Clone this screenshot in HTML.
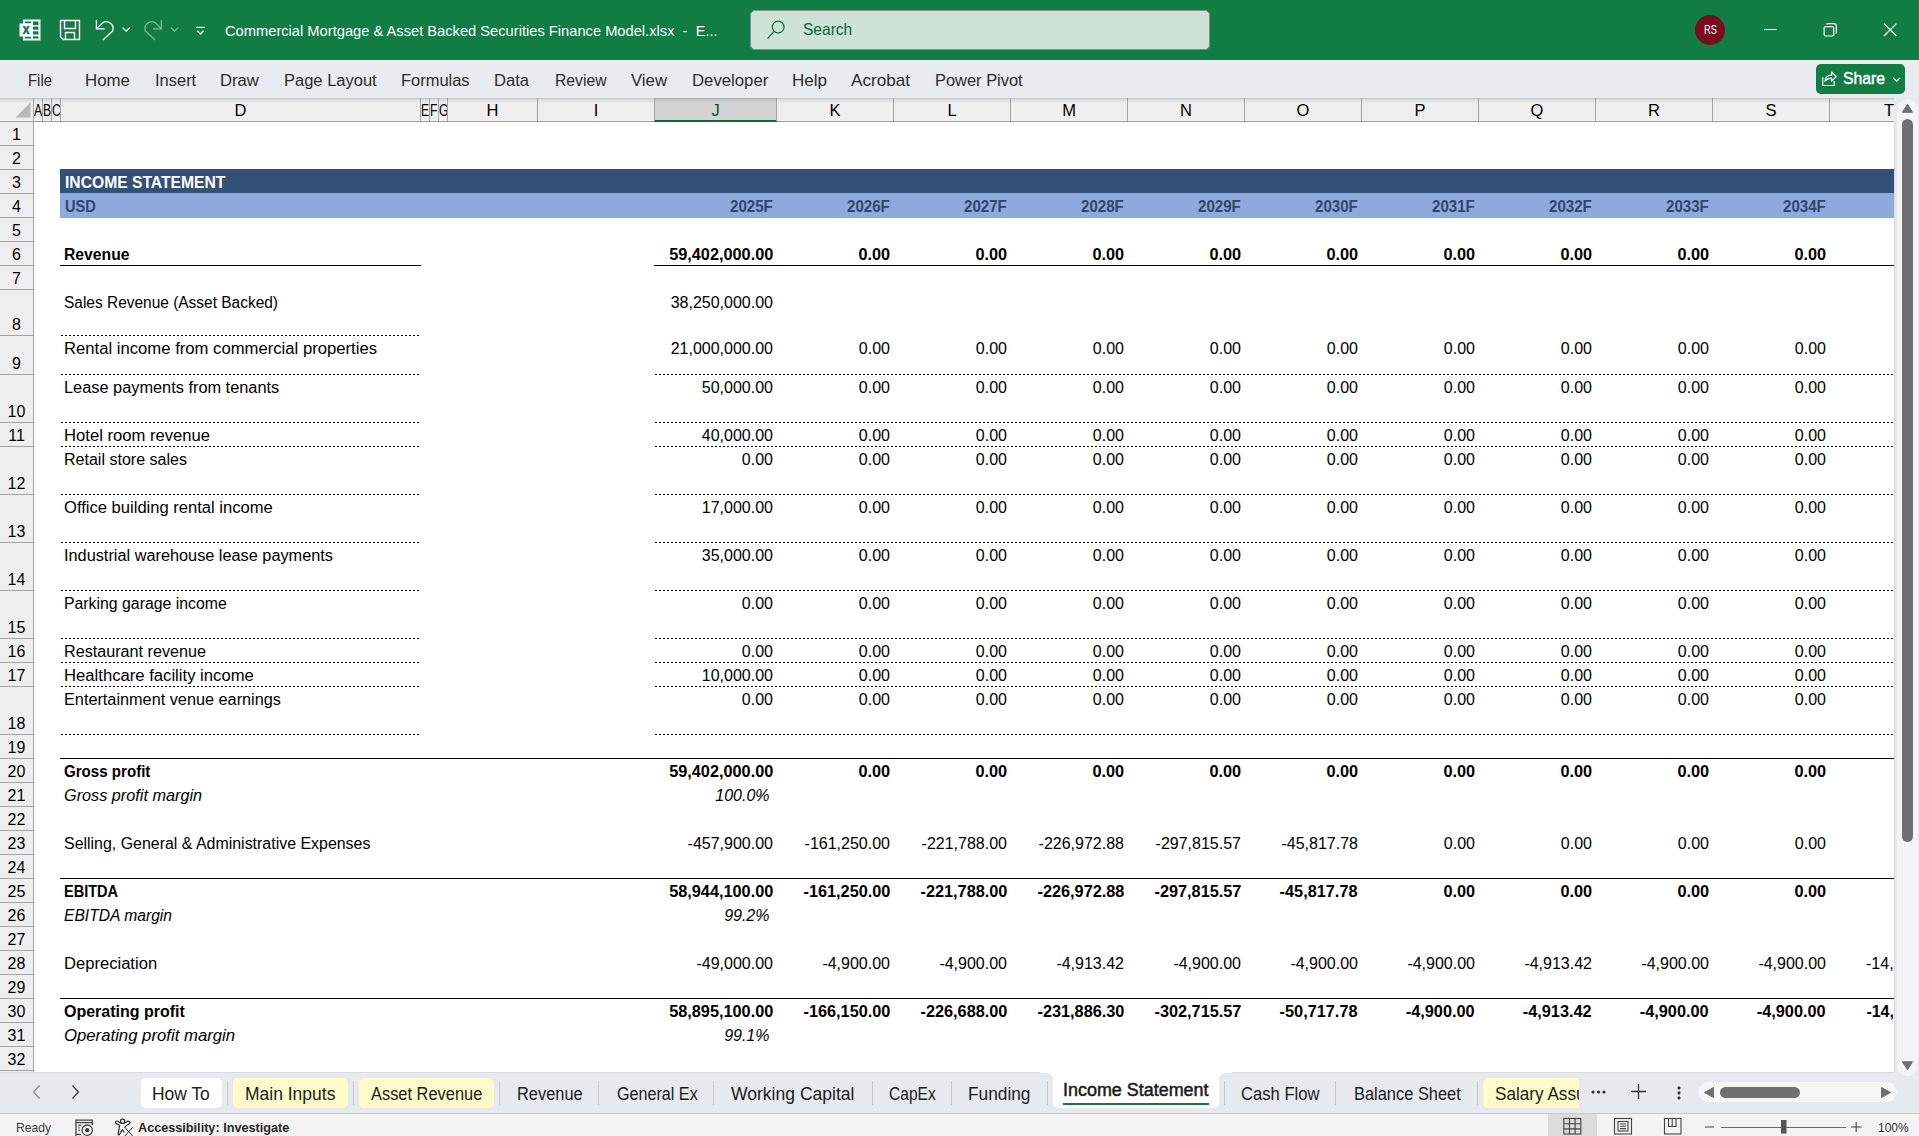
<!DOCTYPE html><html><head><meta charset="utf-8"><style>
html,body{margin:0;padding:0;width:1919px;height:1136px;overflow:hidden;background:#fff;font-family:"Liberation Sans", sans-serif;}
.t{position:absolute;white-space:pre;}
.r{position:absolute;}
svg{position:absolute;overflow:visible;}
</style></head><body>
<div class="r" style="left:0px;top:0px;width:1919px;height:60px;background:#117c43;"></div>
<svg style="left:0;top:0" width="1919" height="60" viewBox="0 0 1919 60">
<rect x="23" y="19.5" width="17.5" height="21" fill="#fff"/>
<rect x="25" y="21.5" width="6" height="2" fill="#117c43"/>
<rect x="33" y="21.5" width="5.5" height="3.5" fill="#117c43"/>
<rect x="33" y="26.5" width="5.5" height="3.2" fill="#117c43"/>
<rect x="33" y="31.3" width="5.5" height="3.2" fill="#117c43"/>
<rect x="33" y="36.3" width="5.5" height="2.2" fill="#117c43"/>
<rect x="25" y="36.5" width="6" height="2" fill="#117c43"/>
<rect x="19.5" y="23.5" width="13" height="13" fill="#fff"/>
<path d="M22.6 26 H25.1 L26.2 28.3 L27.3 26 H29.8 L27.5 30 L29.9 34 H27.4 L26.2 31.6 L25 34 H22.5 L24.9 30 Z" fill="#117c43"/>
<path d="M60.5 20.5 H79.5 V39.5 H63.3 L60.5 36.7 Z" stroke="#fff" stroke-width="1.4" fill="none"/>
<path d="M64.5 20.5 V28.5 H75.5 V20.5" stroke="#fff" stroke-width="1.4" fill="none"/>
<path d="M65.5 39.5 V32.5 H74.5 V39.5" stroke="#fff" stroke-width="1.4" fill="none"/>
<g stroke="#fff" stroke-width="1.3" fill="none">
<path d="M96.4 20 V28.8 H104.8"/>
<path d="M96.9 28.3 L102.6 22.9 A6.7 6.7 0 0 1 112.5 31 L102.9 39.9"/>
<path d="M122.6 27.6 L126.2 31.2 L129.8 27.6"/>
</g>
<g stroke="#fff" stroke-opacity="0.45" stroke-width="1.3" fill="none">
<path d="M161.4 20 V28.8 H153"/>
<path d="M161.1 28.3 L155.4 22.9 A6.7 6.7 0 0 0 145.5 31 L155.1 39.9"/>
<path d="M171 27.6 L174.6 31.2 L178.2 27.6"/>
</g>
<g stroke="#fff" stroke-width="1.3" fill="none">
<path d="M196 27.4 H204.8"/>
<path d="M197.2 30.8 L200.4 34 L203.6 30.8"/>
</g>
<path d="M1764 29.5 H1776.5" stroke="#fff" stroke-width="1.1"/>
<rect x="1824.1" y="26.6" width="9.6" height="9.4" rx="1.5" stroke="#fff" stroke-width="1.2" fill="none"/>
<path d="M1826.4 24.4 Q1826.9 23.6 1828.2 23.6 H1834 Q1836.3 23.6 1836.3 25.9 V31.8 Q1836.3 33.1 1835.7 33.6" stroke="#fff" stroke-width="1.2" fill="none"/>
<path d="M1884 23.6 L1896.4 36 M1896.4 23.6 L1884 36" stroke="#fff" stroke-width="1.2"/>
<circle cx="1710" cy="30" r="15" fill="#7a0c1f"/>
</svg>
<div class="t sc" style="transform:scaleX(0.9664);transform-origin:0 0;left:225.3px;top:23.13px;font-size:15.2px;line-height:15.2px;color:#fff;">Commercial Mortgage &amp; Asset Backed Securities Finance Model.xlsx  -  E...</div>
<div class="t sc" style="transform:scaleX(0.7424);transform-origin:0 0;left:1703.5px;top:24.42px;font-size:12.5px;line-height:12.5px;color:#fff;">RS</div>
<div class="r" style="left:750px;top:10px;width:460px;height:40px;background:#cfe2d6;border:1px solid #7f9487;box-sizing:border-box;border-radius:5px;"></div>
<svg style="left:0;top:0" width="1919" height="60"><g stroke="#0f6b39" stroke-width="1.2" fill="none">
<circle cx="778.2" cy="27" r="5.9"/><path d="M774 31.4 L767.6 38.6"/></g></svg>
<div class="t sc" style="transform:scaleX(0.9411);transform-origin:0 0;left:802.8px;top:21.03px;font-size:16.5px;line-height:16.5px;color:#0e6236;">Search</div>
<div class="r" style="left:0px;top:60px;width:1919px;height:38px;background:#e8ebf0;"></div>
<div class="t tab" style="transform:scaleX(0.9309);transform-origin:0 0;left:27.5px;top:73.46px;font-size:16px;line-height:16px;color:#2b2b2b;">File</div>
<div class="t tab" style="transform:scaleX(1.0542);transform-origin:0 0;left:84.5px;top:73.46px;font-size:16px;line-height:16px;color:#2b2b2b;">Home</div>
<div class="t tab" style="transform:scaleX(1.0296);transform-origin:0 0;left:154.5px;top:73.46px;font-size:16px;line-height:16px;color:#2b2b2b;">Insert</div>
<div class="t tab" style="transform:scaleX(1.0390);transform-origin:0 0;left:220px;top:73.46px;font-size:16px;line-height:16px;color:#2b2b2b;">Draw</div>
<div class="t tab" style="transform:scaleX(1.0316);transform-origin:0 0;left:284px;top:73.46px;font-size:16px;line-height:16px;color:#2b2b2b;">Page Layout</div>
<div class="t tab" style="transform:scaleX(1.0287);transform-origin:0 0;left:401px;top:73.46px;font-size:16px;line-height:16px;color:#2b2b2b;">Formulas</div>
<div class="t tab" style="transform:scaleX(1.0356);transform-origin:0 0;left:494.3px;top:73.46px;font-size:16px;line-height:16px;color:#2b2b2b;">Data</div>
<div class="t tab" style="transform:scaleX(0.9815);transform-origin:0 0;left:554.5px;top:73.46px;font-size:16px;line-height:16px;color:#2b2b2b;">Review</div>
<div class="t tab" style="transform:scaleX(1.0468);transform-origin:0 0;left:631px;top:73.46px;font-size:16px;line-height:16px;color:#2b2b2b;">View</div>
<div class="t tab" style="transform:scaleX(1.0461);transform-origin:0 0;left:691.5px;top:73.46px;font-size:16px;line-height:16px;color:#2b2b2b;">Developer</div>
<div class="t tab" style="transform:scaleX(1.0636);transform-origin:0 0;left:792px;top:73.46px;font-size:16px;line-height:16px;color:#2b2b2b;">Help</div>
<div class="t tab" style="transform:scaleX(1.0700);transform-origin:0 0;left:851.3px;top:73.46px;font-size:16px;line-height:16px;color:#2b2b2b;">Acrobat</div>
<div class="t tab" style="transform:scaleX(1.0272);transform-origin:0 0;left:935.3px;top:73.46px;font-size:16px;line-height:16px;color:#2b2b2b;">Power Pivot</div>
<div class="r" style="left:1816px;top:64px;width:89px;height:30px;background:#117c43;border-radius:5px;"></div>
<svg style="left:0;top:0" width="1919" height="100"><g stroke="#fff" stroke-width="1.2" fill="none">
<path d="M1822.7 77.3 V85.5 H1834.2 V81"/>
<path d="M1824.9 81.2 C1825.4 77.2 1828 75.2 1831.6 75.2 V72 L1836.2 76.6 L1831.6 81.1 V78.1 C1829 78.1 1826.6 79.2 1824.9 81.2 Z" stroke-linejoin="round"/>
<path d="M1893.2 77.8 L1896.6 81.2 L1900 77.8"/>
</g></svg>
<div class="t sc" style="transform:scaleX(0.9134);transform-origin:0 0;left:1842.9px;top:70.44px;font-size:17.2px;line-height:17.2px;color:#fff;-webkit-text-stroke:0.45px #fff;">Share</div>
<div class="r" style="left:0px;top:98px;width:1894px;height:24px;background:linear-gradient(#c9c9c9 0px,#e6e6e6 3px,#efefef 6px,#efefef 22px,#fafafa 23px);"></div>
<div class="r" style="left:655px;top:98px;width:121px;height:22px;background:linear-gradient(#b3b3b3 0px,#cccccc 3px,#d3d3d3 6px);"></div>
<div class="r" style="left:654px;top:120px;width:123px;height:2px;background:#0b6b36;"></div>
<div class="r" style="left:0px;top:121px;width:654px;height:1px;background:#9e9e9e;"></div>
<div class="r" style="left:777px;top:121px;width:1117px;height:1px;background:#9e9e9e;"></div>
<div class="r" style="left:42px;top:98px;width:1px;height:23px;background:#a3a3a3;"></div>
<div class="r" style="left:51px;top:98px;width:1px;height:23px;background:#a3a3a3;"></div>
<div class="r" style="left:60px;top:98px;width:1px;height:23px;background:#a3a3a3;"></div>
<div class="r" style="left:420px;top:98px;width:1px;height:23px;background:#a3a3a3;"></div>
<div class="r" style="left:429px;top:98px;width:1px;height:23px;background:#a3a3a3;"></div>
<div class="r" style="left:438px;top:98px;width:1px;height:23px;background:#a3a3a3;"></div>
<div class="r" style="left:447px;top:98px;width:1px;height:23px;background:#a3a3a3;"></div>
<div class="r" style="left:537px;top:98px;width:1px;height:23px;background:#a3a3a3;"></div>
<div class="r" style="left:654px;top:98px;width:1px;height:23px;background:#a3a3a3;"></div>
<div class="r" style="left:776px;top:98px;width:1px;height:23px;background:#a3a3a3;"></div>
<div class="r" style="left:893px;top:98px;width:1px;height:23px;background:#a3a3a3;"></div>
<div class="r" style="left:1010px;top:98px;width:1px;height:23px;background:#a3a3a3;"></div>
<div class="r" style="left:1127px;top:98px;width:1px;height:23px;background:#a3a3a3;"></div>
<div class="r" style="left:1244px;top:98px;width:1px;height:23px;background:#a3a3a3;"></div>
<div class="r" style="left:1361px;top:98px;width:1px;height:23px;background:#a3a3a3;"></div>
<div class="r" style="left:1478px;top:98px;width:1px;height:23px;background:#a3a3a3;"></div>
<div class="r" style="left:1595px;top:98px;width:1px;height:23px;background:#a3a3a3;"></div>
<div class="r" style="left:1712px;top:98px;width:1px;height:23px;background:#a3a3a3;"></div>
<div class="r" style="left:1829px;top:98px;width:1px;height:23px;background:#a3a3a3;"></div>
<div class="r" style="left:33px;top:98px;width:1px;height:24px;background:#a3a3a3;"></div>
<svg style="left:0;top:98" width="33" height="24"><path d="M30.5 4.5 V19.5 H15.5 Z" fill="#b8b8b8"/></svg>
<div class="r" style="left:34px;top:98px;width:8px;height:23px;overflow:hidden;"><div class="t" style="left:0px;top:4.03px;font-size:16.5px;line-height:16.5px;color:#000;transform:scaleX(0.74);transform-origin:0 0;">A</div></div>
<div class="r" style="left:43px;top:98px;width:8px;height:23px;overflow:hidden;"><div class="t" style="left:0px;top:4.03px;font-size:16.5px;line-height:16.5px;color:#000;transform:scaleX(0.74);transform-origin:0 0;">B</div></div>
<div class="r" style="left:52px;top:98px;width:8px;height:23px;overflow:hidden;"><div class="t" style="left:0px;top:4.03px;font-size:16.5px;line-height:16.5px;color:#000;transform:scaleX(0.74);transform-origin:0 0;">C</div></div>
<div class="t" style="left:-59.5px;width:600px;text-align:center;top:102.03px;font-size:16.5px;line-height:16.5px;color:#000;">D</div>
<div class="r" style="left:421px;top:98px;width:8px;height:23px;overflow:hidden;"><div class="t" style="left:0px;top:4.03px;font-size:16.5px;line-height:16.5px;color:#000;transform:scaleX(0.74);transform-origin:0 0;">E</div></div>
<div class="r" style="left:430px;top:98px;width:8px;height:23px;overflow:hidden;"><div class="t" style="left:0px;top:4.03px;font-size:16.5px;line-height:16.5px;color:#000;transform:scaleX(0.74);transform-origin:0 0;">F</div></div>
<div class="r" style="left:439px;top:98px;width:8px;height:23px;overflow:hidden;"><div class="t" style="left:0px;top:4.03px;font-size:16.5px;line-height:16.5px;color:#000;transform:scaleX(0.74);transform-origin:0 0;">G</div></div>
<div class="t" style="left:192.5px;width:600px;text-align:center;top:102.03px;font-size:16.5px;line-height:16.5px;color:#000;">H</div>
<div class="t" style="left:296.0px;width:600px;text-align:center;top:102.03px;font-size:16.5px;line-height:16.5px;color:#000;">I</div>
<div class="t" style="left:415.5px;width:600px;text-align:center;top:102.03px;font-size:16.5px;line-height:16.5px;color:#0b4f2a;">J</div>
<div class="t" style="left:535.0px;width:600px;text-align:center;top:102.03px;font-size:16.5px;line-height:16.5px;color:#000;">K</div>
<div class="t" style="left:652.0px;width:600px;text-align:center;top:102.03px;font-size:16.5px;line-height:16.5px;color:#000;">L</div>
<div class="t" style="left:769.0px;width:600px;text-align:center;top:102.03px;font-size:16.5px;line-height:16.5px;color:#000;">M</div>
<div class="t" style="left:886.0px;width:600px;text-align:center;top:102.03px;font-size:16.5px;line-height:16.5px;color:#000;">N</div>
<div class="t" style="left:1003.0px;width:600px;text-align:center;top:102.03px;font-size:16.5px;line-height:16.5px;color:#000;">O</div>
<div class="t" style="left:1120.0px;width:600px;text-align:center;top:102.03px;font-size:16.5px;line-height:16.5px;color:#000;">P</div>
<div class="t" style="left:1237.0px;width:600px;text-align:center;top:102.03px;font-size:16.5px;line-height:16.5px;color:#000;">Q</div>
<div class="t" style="left:1354.0px;width:600px;text-align:center;top:102.03px;font-size:16.5px;line-height:16.5px;color:#000;">R</div>
<div class="t" style="left:1471.0px;width:600px;text-align:center;top:102.03px;font-size:16.5px;line-height:16.5px;color:#000;">S</div>
<div class="t" style="right:25px;top:102.03px;font-size:16.5px;line-height:16.5px;color:#000;">T</div>
<div class="r" style="left:0px;top:122px;width:33px;height:950px;background:#efefef;"></div>
<div class="r" style="left:33px;top:122px;width:1px;height:950px;background:#a3a3a3;"></div>
<div class="r" style="left:0px;top:145px;width:33px;height:1px;background:#a3a3a3;"></div>
<div class="t" style="left:-283.5px;width:600px;text-align:center;top:127.46px;font-size:16px;line-height:16px;color:#000;">1</div>
<div class="r" style="left:0px;top:169px;width:33px;height:1px;background:#a3a3a3;"></div>
<div class="t" style="left:-283.5px;width:600px;text-align:center;top:151.46px;font-size:16px;line-height:16px;color:#000;">2</div>
<div class="r" style="left:0px;top:193px;width:33px;height:1px;background:#a3a3a3;"></div>
<div class="t" style="left:-283.5px;width:600px;text-align:center;top:175.46px;font-size:16px;line-height:16px;color:#000;">3</div>
<div class="r" style="left:0px;top:217px;width:33px;height:1px;background:#a3a3a3;"></div>
<div class="t" style="left:-283.5px;width:600px;text-align:center;top:199.46px;font-size:16px;line-height:16px;color:#000;">4</div>
<div class="r" style="left:0px;top:241px;width:33px;height:1px;background:#a3a3a3;"></div>
<div class="t" style="left:-283.5px;width:600px;text-align:center;top:223.46px;font-size:16px;line-height:16px;color:#000;">5</div>
<div class="r" style="left:0px;top:265px;width:33px;height:1px;background:#a3a3a3;"></div>
<div class="t" style="left:-283.5px;width:600px;text-align:center;top:247.46px;font-size:16px;line-height:16px;color:#000;">6</div>
<div class="r" style="left:0px;top:289px;width:33px;height:1px;background:#a3a3a3;"></div>
<div class="t" style="left:-283.5px;width:600px;text-align:center;top:271.46px;font-size:16px;line-height:16px;color:#000;">7</div>
<div class="r" style="left:0px;top:335px;width:33px;height:1px;background:#a3a3a3;"></div>
<div class="t" style="left:-283.5px;width:600px;text-align:center;top:317.46px;font-size:16px;line-height:16px;color:#000;">8</div>
<div class="r" style="left:0px;top:374px;width:33px;height:1px;background:#a3a3a3;"></div>
<div class="t" style="left:-283.5px;width:600px;text-align:center;top:356.46px;font-size:16px;line-height:16px;color:#000;">9</div>
<div class="r" style="left:0px;top:422px;width:33px;height:1px;background:#a3a3a3;"></div>
<div class="t" style="left:-283.5px;width:600px;text-align:center;top:404.46px;font-size:16px;line-height:16px;color:#000;">10</div>
<div class="r" style="left:0px;top:446px;width:33px;height:1px;background:#a3a3a3;"></div>
<div class="t" style="left:-283.5px;width:600px;text-align:center;top:428.46px;font-size:16px;line-height:16px;color:#000;">11</div>
<div class="r" style="left:0px;top:494px;width:33px;height:1px;background:#a3a3a3;"></div>
<div class="t" style="left:-283.5px;width:600px;text-align:center;top:476.46px;font-size:16px;line-height:16px;color:#000;">12</div>
<div class="r" style="left:0px;top:542px;width:33px;height:1px;background:#a3a3a3;"></div>
<div class="t" style="left:-283.5px;width:600px;text-align:center;top:524.46px;font-size:16px;line-height:16px;color:#000;">13</div>
<div class="r" style="left:0px;top:590px;width:33px;height:1px;background:#a3a3a3;"></div>
<div class="t" style="left:-283.5px;width:600px;text-align:center;top:572.46px;font-size:16px;line-height:16px;color:#000;">14</div>
<div class="r" style="left:0px;top:638px;width:33px;height:1px;background:#a3a3a3;"></div>
<div class="t" style="left:-283.5px;width:600px;text-align:center;top:620.46px;font-size:16px;line-height:16px;color:#000;">15</div>
<div class="r" style="left:0px;top:662px;width:33px;height:1px;background:#a3a3a3;"></div>
<div class="t" style="left:-283.5px;width:600px;text-align:center;top:644.46px;font-size:16px;line-height:16px;color:#000;">16</div>
<div class="r" style="left:0px;top:686px;width:33px;height:1px;background:#a3a3a3;"></div>
<div class="t" style="left:-283.5px;width:600px;text-align:center;top:668.46px;font-size:16px;line-height:16px;color:#000;">17</div>
<div class="r" style="left:0px;top:734px;width:33px;height:1px;background:#a3a3a3;"></div>
<div class="t" style="left:-283.5px;width:600px;text-align:center;top:716.46px;font-size:16px;line-height:16px;color:#000;">18</div>
<div class="r" style="left:0px;top:758px;width:33px;height:1px;background:#a3a3a3;"></div>
<div class="t" style="left:-283.5px;width:600px;text-align:center;top:740.46px;font-size:16px;line-height:16px;color:#000;">19</div>
<div class="r" style="left:0px;top:782px;width:33px;height:1px;background:#a3a3a3;"></div>
<div class="t" style="left:-283.5px;width:600px;text-align:center;top:764.46px;font-size:16px;line-height:16px;color:#000;">20</div>
<div class="r" style="left:0px;top:806px;width:33px;height:1px;background:#a3a3a3;"></div>
<div class="t" style="left:-283.5px;width:600px;text-align:center;top:788.46px;font-size:16px;line-height:16px;color:#000;">21</div>
<div class="r" style="left:0px;top:830px;width:33px;height:1px;background:#a3a3a3;"></div>
<div class="t" style="left:-283.5px;width:600px;text-align:center;top:812.46px;font-size:16px;line-height:16px;color:#000;">22</div>
<div class="r" style="left:0px;top:854px;width:33px;height:1px;background:#a3a3a3;"></div>
<div class="t" style="left:-283.5px;width:600px;text-align:center;top:836.46px;font-size:16px;line-height:16px;color:#000;">23</div>
<div class="r" style="left:0px;top:878px;width:33px;height:1px;background:#a3a3a3;"></div>
<div class="t" style="left:-283.5px;width:600px;text-align:center;top:860.46px;font-size:16px;line-height:16px;color:#000;">24</div>
<div class="r" style="left:0px;top:902px;width:33px;height:1px;background:#a3a3a3;"></div>
<div class="t" style="left:-283.5px;width:600px;text-align:center;top:884.46px;font-size:16px;line-height:16px;color:#000;">25</div>
<div class="r" style="left:0px;top:926px;width:33px;height:1px;background:#a3a3a3;"></div>
<div class="t" style="left:-283.5px;width:600px;text-align:center;top:908.46px;font-size:16px;line-height:16px;color:#000;">26</div>
<div class="r" style="left:0px;top:950px;width:33px;height:1px;background:#a3a3a3;"></div>
<div class="t" style="left:-283.5px;width:600px;text-align:center;top:932.46px;font-size:16px;line-height:16px;color:#000;">27</div>
<div class="r" style="left:0px;top:974px;width:33px;height:1px;background:#a3a3a3;"></div>
<div class="t" style="left:-283.5px;width:600px;text-align:center;top:956.46px;font-size:16px;line-height:16px;color:#000;">28</div>
<div class="r" style="left:0px;top:998px;width:33px;height:1px;background:#a3a3a3;"></div>
<div class="t" style="left:-283.5px;width:600px;text-align:center;top:980.46px;font-size:16px;line-height:16px;color:#000;">29</div>
<div class="r" style="left:0px;top:1022px;width:33px;height:1px;background:#a3a3a3;"></div>
<div class="t" style="left:-283.5px;width:600px;text-align:center;top:1004.46px;font-size:16px;line-height:16px;color:#000;">30</div>
<div class="r" style="left:0px;top:1046px;width:33px;height:1px;background:#a3a3a3;"></div>
<div class="t" style="left:-283.5px;width:600px;text-align:center;top:1028.46px;font-size:16px;line-height:16px;color:#000;">31</div>
<div class="r" style="left:0px;top:1070px;width:33px;height:1px;background:#a3a3a3;"></div>
<div class="t" style="left:-283.5px;width:600px;text-align:center;top:1052.46px;font-size:16px;line-height:16px;color:#000;">32</div>
<div class="r" style="left:34px;top:122px;width:1860px;height:950px;background:#fff;"></div>
<div class="r" style="left:60px;top:169px;width:1834px;height:24px;background:#335076;"></div>
<div class="r" style="left:60px;top:193px;width:1834px;height:25px;background:#8ea9db;"></div>
<div class="t sc" style="transform:scaleX(0.9784);transform-origin:0 0;left:64.6px;top:175.46px;font-size:16px;line-height:16px;font-weight:bold;color:#fff;">INCOME STATEMENT</div>
<div class="t sc" style="transform:scaleX(0.9117);transform-origin:0 0;left:64.8px;top:199.46px;font-size:16px;line-height:16px;font-weight:bold;color:#30466b;">USD</div>
<div class="t sc" style="transform:scaleX(0.9433);transform-origin:0 0;left:729.6px;top:199.46px;font-size:16px;line-height:16px;font-weight:bold;color:#30466b;">2025F</div>
<div class="t sc" style="transform:scaleX(0.9433);transform-origin:0 0;left:846.6px;top:199.46px;font-size:16px;line-height:16px;font-weight:bold;color:#30466b;">2026F</div>
<div class="t sc" style="transform:scaleX(0.9433);transform-origin:0 0;left:963.6px;top:199.46px;font-size:16px;line-height:16px;font-weight:bold;color:#30466b;">2027F</div>
<div class="t sc" style="transform:scaleX(0.9433);transform-origin:0 0;left:1080.6000000000001px;top:199.46px;font-size:16px;line-height:16px;font-weight:bold;color:#30466b;">2028F</div>
<div class="t sc" style="transform:scaleX(0.9433);transform-origin:0 0;left:1197.6000000000001px;top:199.46px;font-size:16px;line-height:16px;font-weight:bold;color:#30466b;">2029F</div>
<div class="t sc" style="transform:scaleX(0.9433);transform-origin:0 0;left:1314.6000000000001px;top:199.46px;font-size:16px;line-height:16px;font-weight:bold;color:#30466b;">2030F</div>
<div class="t sc" style="transform:scaleX(0.9433);transform-origin:0 0;left:1431.6000000000001px;top:199.46px;font-size:16px;line-height:16px;font-weight:bold;color:#30466b;">2031F</div>
<div class="t sc" style="transform:scaleX(0.9433);transform-origin:0 0;left:1548.6000000000001px;top:199.46px;font-size:16px;line-height:16px;font-weight:bold;color:#30466b;">2032F</div>
<div class="t sc" style="transform:scaleX(0.9433);transform-origin:0 0;left:1665.6000000000001px;top:199.46px;font-size:16px;line-height:16px;font-weight:bold;color:#30466b;">2033F</div>
<div class="t sc" style="transform:scaleX(0.9433);transform-origin:0 0;left:1782.6000000000001px;top:199.46px;font-size:16px;line-height:16px;font-weight:bold;color:#30466b;">2034F</div>
<div class="t sc" style="transform:scaleX(0.9820);transform-origin:0 0;left:64.3px;top:247.46px;font-size:16px;line-height:16px;font-weight:bold;color:#000;">Revenue</div>
<div class="t" style="right:1146px;top:247.46px;font-size:16px;line-height:16px;font-weight:bold;color:#000;transform:scaleX(1.018);transform-origin:100% 0;">59,402,000.00</div>
<div class="t" style="right:1029px;top:247.46px;font-size:16px;line-height:16px;font-weight:bold;color:#000;transform:scaleX(1.018);transform-origin:100% 0;">0.00</div>
<div class="t" style="right:912px;top:247.46px;font-size:16px;line-height:16px;font-weight:bold;color:#000;transform:scaleX(1.018);transform-origin:100% 0;">0.00</div>
<div class="t" style="right:795px;top:247.46px;font-size:16px;line-height:16px;font-weight:bold;color:#000;transform:scaleX(1.018);transform-origin:100% 0;">0.00</div>
<div class="t" style="right:678px;top:247.46px;font-size:16px;line-height:16px;font-weight:bold;color:#000;transform:scaleX(1.018);transform-origin:100% 0;">0.00</div>
<div class="t" style="right:561px;top:247.46px;font-size:16px;line-height:16px;font-weight:bold;color:#000;transform:scaleX(1.018);transform-origin:100% 0;">0.00</div>
<div class="t" style="right:444px;top:247.46px;font-size:16px;line-height:16px;font-weight:bold;color:#000;transform:scaleX(1.018);transform-origin:100% 0;">0.00</div>
<div class="t" style="right:327px;top:247.46px;font-size:16px;line-height:16px;font-weight:bold;color:#000;transform:scaleX(1.018);transform-origin:100% 0;">0.00</div>
<div class="t" style="right:210px;top:247.46px;font-size:16px;line-height:16px;font-weight:bold;color:#000;transform:scaleX(1.018);transform-origin:100% 0;">0.00</div>
<div class="t" style="right:93px;top:247.46px;font-size:16px;line-height:16px;font-weight:bold;color:#000;transform:scaleX(1.018);transform-origin:100% 0;">0.00</div>
<div class="r" style="left:60px;top:265px;width:361px;height:1px;background:#000;"></div>
<div class="r" style="left:654px;top:265px;width:1240px;height:1px;background:#000;"></div>
<div class="t sc" style="transform:scaleX(0.9663);transform-origin:0 0;left:64px;top:295.46px;font-size:16px;line-height:16px;color:#000;">Sales Revenue (Asset Backed)</div>
<div class="t" style="right:1146px;top:295.46px;font-size:16px;line-height:16px;color:#000;">38,250,000.00</div>
<div class="r" style="left:61px;top:335px;width:360px;height:1px;background:repeating-linear-gradient(90deg,#000 0px,#000 2px,transparent 2px,transparent 4px);"></div>
<div class="t sc" style="transform:scaleX(1.0414);transform-origin:0 0;left:64.3px;top:341.46px;font-size:16px;line-height:16px;color:#000;">Rental income from commercial properties</div>
<div class="t" style="right:1146px;top:341.46px;font-size:16px;line-height:16px;color:#000;">21,000,000.00</div>
<div class="t" style="right:1029px;top:341.46px;font-size:16px;line-height:16px;color:#000;">0.00</div>
<div class="t" style="right:912px;top:341.46px;font-size:16px;line-height:16px;color:#000;">0.00</div>
<div class="t" style="right:795px;top:341.46px;font-size:16px;line-height:16px;color:#000;">0.00</div>
<div class="t" style="right:678px;top:341.46px;font-size:16px;line-height:16px;color:#000;">0.00</div>
<div class="t" style="right:561px;top:341.46px;font-size:16px;line-height:16px;color:#000;">0.00</div>
<div class="t" style="right:444px;top:341.46px;font-size:16px;line-height:16px;color:#000;">0.00</div>
<div class="t" style="right:327px;top:341.46px;font-size:16px;line-height:16px;color:#000;">0.00</div>
<div class="t" style="right:210px;top:341.46px;font-size:16px;line-height:16px;color:#000;">0.00</div>
<div class="t" style="right:93px;top:341.46px;font-size:16px;line-height:16px;color:#000;">0.00</div>
<div class="r" style="left:61px;top:374px;width:360px;height:1px;background:repeating-linear-gradient(90deg,#000 0px,#000 2px,transparent 2px,transparent 4px);"></div>
<div class="r" style="left:655px;top:374px;width:1239px;height:1px;background:repeating-linear-gradient(90deg,#000 0px,#000 2px,transparent 2px,transparent 4px);"></div>
<div class="t sc" style="transform:scaleX(1.0210);transform-origin:0 0;left:64.3px;top:380.46px;font-size:16px;line-height:16px;color:#000;">Lease payments from tenants</div>
<div class="t" style="right:1146px;top:380.46px;font-size:16px;line-height:16px;color:#000;">50,000.00</div>
<div class="t" style="right:1029px;top:380.46px;font-size:16px;line-height:16px;color:#000;">0.00</div>
<div class="t" style="right:912px;top:380.46px;font-size:16px;line-height:16px;color:#000;">0.00</div>
<div class="t" style="right:795px;top:380.46px;font-size:16px;line-height:16px;color:#000;">0.00</div>
<div class="t" style="right:678px;top:380.46px;font-size:16px;line-height:16px;color:#000;">0.00</div>
<div class="t" style="right:561px;top:380.46px;font-size:16px;line-height:16px;color:#000;">0.00</div>
<div class="t" style="right:444px;top:380.46px;font-size:16px;line-height:16px;color:#000;">0.00</div>
<div class="t" style="right:327px;top:380.46px;font-size:16px;line-height:16px;color:#000;">0.00</div>
<div class="t" style="right:210px;top:380.46px;font-size:16px;line-height:16px;color:#000;">0.00</div>
<div class="t" style="right:93px;top:380.46px;font-size:16px;line-height:16px;color:#000;">0.00</div>
<div class="r" style="left:61px;top:422px;width:360px;height:1px;background:repeating-linear-gradient(90deg,#000 0px,#000 2px,transparent 2px,transparent 4px);"></div>
<div class="r" style="left:655px;top:422px;width:1239px;height:1px;background:repeating-linear-gradient(90deg,#000 0px,#000 2px,transparent 2px,transparent 4px);"></div>
<div class="t sc" style="transform:scaleX(1.0397);transform-origin:0 0;left:64.3px;top:428.46px;font-size:16px;line-height:16px;color:#000;">Hotel room revenue</div>
<div class="t" style="right:1146px;top:428.46px;font-size:16px;line-height:16px;color:#000;">40,000.00</div>
<div class="t" style="right:1029px;top:428.46px;font-size:16px;line-height:16px;color:#000;">0.00</div>
<div class="t" style="right:912px;top:428.46px;font-size:16px;line-height:16px;color:#000;">0.00</div>
<div class="t" style="right:795px;top:428.46px;font-size:16px;line-height:16px;color:#000;">0.00</div>
<div class="t" style="right:678px;top:428.46px;font-size:16px;line-height:16px;color:#000;">0.00</div>
<div class="t" style="right:561px;top:428.46px;font-size:16px;line-height:16px;color:#000;">0.00</div>
<div class="t" style="right:444px;top:428.46px;font-size:16px;line-height:16px;color:#000;">0.00</div>
<div class="t" style="right:327px;top:428.46px;font-size:16px;line-height:16px;color:#000;">0.00</div>
<div class="t" style="right:210px;top:428.46px;font-size:16px;line-height:16px;color:#000;">0.00</div>
<div class="t" style="right:93px;top:428.46px;font-size:16px;line-height:16px;color:#000;">0.00</div>
<div class="r" style="left:61px;top:446px;width:360px;height:1px;background:repeating-linear-gradient(90deg,#000 0px,#000 2px,transparent 2px,transparent 4px);"></div>
<div class="r" style="left:655px;top:446px;width:1239px;height:1px;background:repeating-linear-gradient(90deg,#000 0px,#000 2px,transparent 2px,transparent 4px);"></div>
<div class="t sc" style="transform:scaleX(1.0023);transform-origin:0 0;left:64.3px;top:452.46px;font-size:16px;line-height:16px;color:#000;">Retail store sales</div>
<div class="t" style="right:1146px;top:452.46px;font-size:16px;line-height:16px;color:#000;">0.00</div>
<div class="t" style="right:1029px;top:452.46px;font-size:16px;line-height:16px;color:#000;">0.00</div>
<div class="t" style="right:912px;top:452.46px;font-size:16px;line-height:16px;color:#000;">0.00</div>
<div class="t" style="right:795px;top:452.46px;font-size:16px;line-height:16px;color:#000;">0.00</div>
<div class="t" style="right:678px;top:452.46px;font-size:16px;line-height:16px;color:#000;">0.00</div>
<div class="t" style="right:561px;top:452.46px;font-size:16px;line-height:16px;color:#000;">0.00</div>
<div class="t" style="right:444px;top:452.46px;font-size:16px;line-height:16px;color:#000;">0.00</div>
<div class="t" style="right:327px;top:452.46px;font-size:16px;line-height:16px;color:#000;">0.00</div>
<div class="t" style="right:210px;top:452.46px;font-size:16px;line-height:16px;color:#000;">0.00</div>
<div class="t" style="right:93px;top:452.46px;font-size:16px;line-height:16px;color:#000;">0.00</div>
<div class="r" style="left:61px;top:494px;width:360px;height:1px;background:repeating-linear-gradient(90deg,#000 0px,#000 2px,transparent 2px,transparent 4px);"></div>
<div class="r" style="left:655px;top:494px;width:1239px;height:1px;background:repeating-linear-gradient(90deg,#000 0px,#000 2px,transparent 2px,transparent 4px);"></div>
<div class="t sc" style="transform:scaleX(1.0357);transform-origin:0 0;left:64.3px;top:500.46px;font-size:16px;line-height:16px;color:#000;">Office building rental income</div>
<div class="t" style="right:1146px;top:500.46px;font-size:16px;line-height:16px;color:#000;">17,000.00</div>
<div class="t" style="right:1029px;top:500.46px;font-size:16px;line-height:16px;color:#000;">0.00</div>
<div class="t" style="right:912px;top:500.46px;font-size:16px;line-height:16px;color:#000;">0.00</div>
<div class="t" style="right:795px;top:500.46px;font-size:16px;line-height:16px;color:#000;">0.00</div>
<div class="t" style="right:678px;top:500.46px;font-size:16px;line-height:16px;color:#000;">0.00</div>
<div class="t" style="right:561px;top:500.46px;font-size:16px;line-height:16px;color:#000;">0.00</div>
<div class="t" style="right:444px;top:500.46px;font-size:16px;line-height:16px;color:#000;">0.00</div>
<div class="t" style="right:327px;top:500.46px;font-size:16px;line-height:16px;color:#000;">0.00</div>
<div class="t" style="right:210px;top:500.46px;font-size:16px;line-height:16px;color:#000;">0.00</div>
<div class="t" style="right:93px;top:500.46px;font-size:16px;line-height:16px;color:#000;">0.00</div>
<div class="r" style="left:61px;top:542px;width:360px;height:1px;background:repeating-linear-gradient(90deg,#000 0px,#000 2px,transparent 2px,transparent 4px);"></div>
<div class="r" style="left:655px;top:542px;width:1239px;height:1px;background:repeating-linear-gradient(90deg,#000 0px,#000 2px,transparent 2px,transparent 4px);"></div>
<div class="t sc" style="transform:scaleX(1.0183);transform-origin:0 0;left:64.3px;top:548.46px;font-size:16px;line-height:16px;color:#000;">Industrial warehouse lease payments</div>
<div class="t" style="right:1146px;top:548.46px;font-size:16px;line-height:16px;color:#000;">35,000.00</div>
<div class="t" style="right:1029px;top:548.46px;font-size:16px;line-height:16px;color:#000;">0.00</div>
<div class="t" style="right:912px;top:548.46px;font-size:16px;line-height:16px;color:#000;">0.00</div>
<div class="t" style="right:795px;top:548.46px;font-size:16px;line-height:16px;color:#000;">0.00</div>
<div class="t" style="right:678px;top:548.46px;font-size:16px;line-height:16px;color:#000;">0.00</div>
<div class="t" style="right:561px;top:548.46px;font-size:16px;line-height:16px;color:#000;">0.00</div>
<div class="t" style="right:444px;top:548.46px;font-size:16px;line-height:16px;color:#000;">0.00</div>
<div class="t" style="right:327px;top:548.46px;font-size:16px;line-height:16px;color:#000;">0.00</div>
<div class="t" style="right:210px;top:548.46px;font-size:16px;line-height:16px;color:#000;">0.00</div>
<div class="t" style="right:93px;top:548.46px;font-size:16px;line-height:16px;color:#000;">0.00</div>
<div class="r" style="left:61px;top:590px;width:360px;height:1px;background:repeating-linear-gradient(90deg,#000 0px,#000 2px,transparent 2px,transparent 4px);"></div>
<div class="r" style="left:655px;top:590px;width:1239px;height:1px;background:repeating-linear-gradient(90deg,#000 0px,#000 2px,transparent 2px,transparent 4px);"></div>
<div class="t sc" style="transform:scaleX(0.9888);transform-origin:0 0;left:64.3px;top:596.46px;font-size:16px;line-height:16px;color:#000;">Parking garage income</div>
<div class="t" style="right:1146px;top:596.46px;font-size:16px;line-height:16px;color:#000;">0.00</div>
<div class="t" style="right:1029px;top:596.46px;font-size:16px;line-height:16px;color:#000;">0.00</div>
<div class="t" style="right:912px;top:596.46px;font-size:16px;line-height:16px;color:#000;">0.00</div>
<div class="t" style="right:795px;top:596.46px;font-size:16px;line-height:16px;color:#000;">0.00</div>
<div class="t" style="right:678px;top:596.46px;font-size:16px;line-height:16px;color:#000;">0.00</div>
<div class="t" style="right:561px;top:596.46px;font-size:16px;line-height:16px;color:#000;">0.00</div>
<div class="t" style="right:444px;top:596.46px;font-size:16px;line-height:16px;color:#000;">0.00</div>
<div class="t" style="right:327px;top:596.46px;font-size:16px;line-height:16px;color:#000;">0.00</div>
<div class="t" style="right:210px;top:596.46px;font-size:16px;line-height:16px;color:#000;">0.00</div>
<div class="t" style="right:93px;top:596.46px;font-size:16px;line-height:16px;color:#000;">0.00</div>
<div class="r" style="left:61px;top:638px;width:360px;height:1px;background:repeating-linear-gradient(90deg,#000 0px,#000 2px,transparent 2px,transparent 4px);"></div>
<div class="r" style="left:655px;top:638px;width:1239px;height:1px;background:repeating-linear-gradient(90deg,#000 0px,#000 2px,transparent 2px,transparent 4px);"></div>
<div class="t sc" style="transform:scaleX(1.0105);transform-origin:0 0;left:64.3px;top:644.46px;font-size:16px;line-height:16px;color:#000;">Restaurant revenue</div>
<div class="t" style="right:1146px;top:644.46px;font-size:16px;line-height:16px;color:#000;">0.00</div>
<div class="t" style="right:1029px;top:644.46px;font-size:16px;line-height:16px;color:#000;">0.00</div>
<div class="t" style="right:912px;top:644.46px;font-size:16px;line-height:16px;color:#000;">0.00</div>
<div class="t" style="right:795px;top:644.46px;font-size:16px;line-height:16px;color:#000;">0.00</div>
<div class="t" style="right:678px;top:644.46px;font-size:16px;line-height:16px;color:#000;">0.00</div>
<div class="t" style="right:561px;top:644.46px;font-size:16px;line-height:16px;color:#000;">0.00</div>
<div class="t" style="right:444px;top:644.46px;font-size:16px;line-height:16px;color:#000;">0.00</div>
<div class="t" style="right:327px;top:644.46px;font-size:16px;line-height:16px;color:#000;">0.00</div>
<div class="t" style="right:210px;top:644.46px;font-size:16px;line-height:16px;color:#000;">0.00</div>
<div class="t" style="right:93px;top:644.46px;font-size:16px;line-height:16px;color:#000;">0.00</div>
<div class="r" style="left:61px;top:662px;width:360px;height:1px;background:repeating-linear-gradient(90deg,#000 0px,#000 2px,transparent 2px,transparent 4px);"></div>
<div class="r" style="left:655px;top:662px;width:1239px;height:1px;background:repeating-linear-gradient(90deg,#000 0px,#000 2px,transparent 2px,transparent 4px);"></div>
<div class="t sc" style="transform:scaleX(1.0412);transform-origin:0 0;left:64.3px;top:668.46px;font-size:16px;line-height:16px;color:#000;">Healthcare facility income</div>
<div class="t" style="right:1146px;top:668.46px;font-size:16px;line-height:16px;color:#000;">10,000.00</div>
<div class="t" style="right:1029px;top:668.46px;font-size:16px;line-height:16px;color:#000;">0.00</div>
<div class="t" style="right:912px;top:668.46px;font-size:16px;line-height:16px;color:#000;">0.00</div>
<div class="t" style="right:795px;top:668.46px;font-size:16px;line-height:16px;color:#000;">0.00</div>
<div class="t" style="right:678px;top:668.46px;font-size:16px;line-height:16px;color:#000;">0.00</div>
<div class="t" style="right:561px;top:668.46px;font-size:16px;line-height:16px;color:#000;">0.00</div>
<div class="t" style="right:444px;top:668.46px;font-size:16px;line-height:16px;color:#000;">0.00</div>
<div class="t" style="right:327px;top:668.46px;font-size:16px;line-height:16px;color:#000;">0.00</div>
<div class="t" style="right:210px;top:668.46px;font-size:16px;line-height:16px;color:#000;">0.00</div>
<div class="t" style="right:93px;top:668.46px;font-size:16px;line-height:16px;color:#000;">0.00</div>
<div class="r" style="left:61px;top:686px;width:360px;height:1px;background:repeating-linear-gradient(90deg,#000 0px,#000 2px,transparent 2px,transparent 4px);"></div>
<div class="r" style="left:655px;top:686px;width:1239px;height:1px;background:repeating-linear-gradient(90deg,#000 0px,#000 2px,transparent 2px,transparent 4px);"></div>
<div class="t sc" style="transform:scaleX(1.0161);transform-origin:0 0;left:64.3px;top:692.46px;font-size:16px;line-height:16px;color:#000;">Entertainment venue earnings</div>
<div class="t" style="right:1146px;top:692.46px;font-size:16px;line-height:16px;color:#000;">0.00</div>
<div class="t" style="right:1029px;top:692.46px;font-size:16px;line-height:16px;color:#000;">0.00</div>
<div class="t" style="right:912px;top:692.46px;font-size:16px;line-height:16px;color:#000;">0.00</div>
<div class="t" style="right:795px;top:692.46px;font-size:16px;line-height:16px;color:#000;">0.00</div>
<div class="t" style="right:678px;top:692.46px;font-size:16px;line-height:16px;color:#000;">0.00</div>
<div class="t" style="right:561px;top:692.46px;font-size:16px;line-height:16px;color:#000;">0.00</div>
<div class="t" style="right:444px;top:692.46px;font-size:16px;line-height:16px;color:#000;">0.00</div>
<div class="t" style="right:327px;top:692.46px;font-size:16px;line-height:16px;color:#000;">0.00</div>
<div class="t" style="right:210px;top:692.46px;font-size:16px;line-height:16px;color:#000;">0.00</div>
<div class="t" style="right:93px;top:692.46px;font-size:16px;line-height:16px;color:#000;">0.00</div>
<div class="r" style="left:61px;top:734px;width:360px;height:1px;background:repeating-linear-gradient(90deg,#000 0px,#000 2px,transparent 2px,transparent 4px);"></div>
<div class="r" style="left:655px;top:734px;width:1239px;height:1px;background:repeating-linear-gradient(90deg,#000 0px,#000 2px,transparent 2px,transparent 4px);"></div>
<div class="r" style="left:60px;top:758px;width:1834px;height:1px;background:#000;"></div>
<div class="t sc" style="transform:scaleX(0.9436);transform-origin:0 0;left:64.3px;top:764.46px;font-size:16px;line-height:16px;font-weight:bold;color:#000;">Gross profit</div>
<div class="t" style="right:1146px;top:764.46px;font-size:16px;line-height:16px;font-weight:bold;color:#000;transform:scaleX(1.018);transform-origin:100% 0;">59,402,000.00</div>
<div class="t" style="right:1029px;top:764.46px;font-size:16px;line-height:16px;font-weight:bold;color:#000;transform:scaleX(1.018);transform-origin:100% 0;">0.00</div>
<div class="t" style="right:912px;top:764.46px;font-size:16px;line-height:16px;font-weight:bold;color:#000;transform:scaleX(1.018);transform-origin:100% 0;">0.00</div>
<div class="t" style="right:795px;top:764.46px;font-size:16px;line-height:16px;font-weight:bold;color:#000;transform:scaleX(1.018);transform-origin:100% 0;">0.00</div>
<div class="t" style="right:678px;top:764.46px;font-size:16px;line-height:16px;font-weight:bold;color:#000;transform:scaleX(1.018);transform-origin:100% 0;">0.00</div>
<div class="t" style="right:561px;top:764.46px;font-size:16px;line-height:16px;font-weight:bold;color:#000;transform:scaleX(1.018);transform-origin:100% 0;">0.00</div>
<div class="t" style="right:444px;top:764.46px;font-size:16px;line-height:16px;font-weight:bold;color:#000;transform:scaleX(1.018);transform-origin:100% 0;">0.00</div>
<div class="t" style="right:327px;top:764.46px;font-size:16px;line-height:16px;font-weight:bold;color:#000;transform:scaleX(1.018);transform-origin:100% 0;">0.00</div>
<div class="t" style="right:210px;top:764.46px;font-size:16px;line-height:16px;font-weight:bold;color:#000;transform:scaleX(1.018);transform-origin:100% 0;">0.00</div>
<div class="t" style="right:93px;top:764.46px;font-size:16px;line-height:16px;font-weight:bold;color:#000;transform:scaleX(1.018);transform-origin:100% 0;">0.00</div>
<div class="t sc" style="transform:scaleX(1.0151);transform-origin:0 0;left:64.3px;top:788.46px;font-size:16px;line-height:16px;font-style:italic;color:#000;">Gross profit margin</div>
<div class="t" style="right:1149.5px;top:788.46px;font-size:16px;line-height:16px;font-style:italic;color:#000;">100.0%</div>
<div class="t sc" style="transform:scaleX(0.9957);transform-origin:0 0;left:64.3px;top:836.46px;font-size:16px;line-height:16px;color:#000;">Selling, General &amp; Administrative Expenses</div>
<div class="t" style="right:1146px;top:836.46px;font-size:16px;line-height:16px;color:#000;">-457,900.00</div>
<div class="t" style="right:1029px;top:836.46px;font-size:16px;line-height:16px;color:#000;">-161,250.00</div>
<div class="t" style="right:912px;top:836.46px;font-size:16px;line-height:16px;color:#000;">-221,788.00</div>
<div class="t" style="right:795px;top:836.46px;font-size:16px;line-height:16px;color:#000;">-226,972.88</div>
<div class="t" style="right:678px;top:836.46px;font-size:16px;line-height:16px;color:#000;">-297,815.57</div>
<div class="t" style="right:561px;top:836.46px;font-size:16px;line-height:16px;color:#000;">-45,817.78</div>
<div class="t" style="right:444px;top:836.46px;font-size:16px;line-height:16px;color:#000;">0.00</div>
<div class="t" style="right:327px;top:836.46px;font-size:16px;line-height:16px;color:#000;">0.00</div>
<div class="t" style="right:210px;top:836.46px;font-size:16px;line-height:16px;color:#000;">0.00</div>
<div class="t" style="right:93px;top:836.46px;font-size:16px;line-height:16px;color:#000;">0.00</div>
<div class="r" style="left:60px;top:878px;width:1834px;height:1px;background:#000;"></div>
<div class="t sc" style="transform:scaleX(0.9083);transform-origin:0 0;left:64.3px;top:884.46px;font-size:16px;line-height:16px;font-weight:bold;color:#000;">EBITDA</div>
<div class="t" style="right:1146px;top:884.46px;font-size:16px;line-height:16px;font-weight:bold;color:#000;transform:scaleX(1.018);transform-origin:100% 0;">58,944,100.00</div>
<div class="t" style="right:1029px;top:884.46px;font-size:16px;line-height:16px;font-weight:bold;color:#000;transform:scaleX(1.018);transform-origin:100% 0;">-161,250.00</div>
<div class="t" style="right:912px;top:884.46px;font-size:16px;line-height:16px;font-weight:bold;color:#000;transform:scaleX(1.018);transform-origin:100% 0;">-221,788.00</div>
<div class="t" style="right:795px;top:884.46px;font-size:16px;line-height:16px;font-weight:bold;color:#000;transform:scaleX(1.018);transform-origin:100% 0;">-226,972.88</div>
<div class="t" style="right:678px;top:884.46px;font-size:16px;line-height:16px;font-weight:bold;color:#000;transform:scaleX(1.018);transform-origin:100% 0;">-297,815.57</div>
<div class="t" style="right:561px;top:884.46px;font-size:16px;line-height:16px;font-weight:bold;color:#000;transform:scaleX(1.018);transform-origin:100% 0;">-45,817.78</div>
<div class="t" style="right:444px;top:884.46px;font-size:16px;line-height:16px;font-weight:bold;color:#000;transform:scaleX(1.018);transform-origin:100% 0;">0.00</div>
<div class="t" style="right:327px;top:884.46px;font-size:16px;line-height:16px;font-weight:bold;color:#000;transform:scaleX(1.018);transform-origin:100% 0;">0.00</div>
<div class="t" style="right:210px;top:884.46px;font-size:16px;line-height:16px;font-weight:bold;color:#000;transform:scaleX(1.018);transform-origin:100% 0;">0.00</div>
<div class="t" style="right:93px;top:884.46px;font-size:16px;line-height:16px;font-weight:bold;color:#000;transform:scaleX(1.018);transform-origin:100% 0;">0.00</div>
<div class="t sc" style="transform:scaleX(0.9770);transform-origin:0 0;left:64.3px;top:908.46px;font-size:16px;line-height:16px;font-style:italic;color:#000;">EBITDA margin</div>
<div class="t" style="right:1149.5px;top:908.46px;font-size:16px;line-height:16px;font-style:italic;color:#000;">99.2%</div>
<div class="t sc" style="transform:scaleX(1.0364);transform-origin:0 0;left:64.3px;top:956.46px;font-size:16px;line-height:16px;color:#000;">Depreciation</div>
<div class="t" style="right:1146px;top:956.46px;font-size:16px;line-height:16px;color:#000;">-49,000.00</div>
<div class="t" style="right:1029px;top:956.46px;font-size:16px;line-height:16px;color:#000;">-4,900.00</div>
<div class="t" style="right:912px;top:956.46px;font-size:16px;line-height:16px;color:#000;">-4,900.00</div>
<div class="t" style="right:795px;top:956.46px;font-size:16px;line-height:16px;color:#000;">-4,913.42</div>
<div class="t" style="right:678px;top:956.46px;font-size:16px;line-height:16px;color:#000;">-4,900.00</div>
<div class="t" style="right:561px;top:956.46px;font-size:16px;line-height:16px;color:#000;">-4,900.00</div>
<div class="t" style="right:444px;top:956.46px;font-size:16px;line-height:16px;color:#000;">-4,900.00</div>
<div class="t" style="right:327px;top:956.46px;font-size:16px;line-height:16px;color:#000;">-4,913.42</div>
<div class="t" style="right:210px;top:956.46px;font-size:16px;line-height:16px;color:#000;">-4,900.00</div>
<div class="t" style="right:93px;top:956.46px;font-size:16px;line-height:16px;color:#000;">-4,900.00</div>
<div class="r" style="left:60px;top:998px;width:1834px;height:1px;background:#000;"></div>
<div class="t sc" style="transform:scaleX(1.0001);transform-origin:0 0;left:64.3px;top:1004.46px;font-size:16px;line-height:16px;font-weight:bold;color:#000;">Operating profit</div>
<div class="t" style="right:1146px;top:1004.46px;font-size:16px;line-height:16px;font-weight:bold;color:#000;transform:scaleX(1.018);transform-origin:100% 0;">58,895,100.00</div>
<div class="t" style="right:1029px;top:1004.46px;font-size:16px;line-height:16px;font-weight:bold;color:#000;transform:scaleX(1.018);transform-origin:100% 0;">-166,150.00</div>
<div class="t" style="right:912px;top:1004.46px;font-size:16px;line-height:16px;font-weight:bold;color:#000;transform:scaleX(1.018);transform-origin:100% 0;">-226,688.00</div>
<div class="t" style="right:795px;top:1004.46px;font-size:16px;line-height:16px;font-weight:bold;color:#000;transform:scaleX(1.018);transform-origin:100% 0;">-231,886.30</div>
<div class="t" style="right:678px;top:1004.46px;font-size:16px;line-height:16px;font-weight:bold;color:#000;transform:scaleX(1.018);transform-origin:100% 0;">-302,715.57</div>
<div class="t" style="right:561px;top:1004.46px;font-size:16px;line-height:16px;font-weight:bold;color:#000;transform:scaleX(1.018);transform-origin:100% 0;">-50,717.78</div>
<div class="t" style="right:444px;top:1004.46px;font-size:16px;line-height:16px;font-weight:bold;color:#000;transform:scaleX(1.018);transform-origin:100% 0;">-4,900.00</div>
<div class="t" style="right:327px;top:1004.46px;font-size:16px;line-height:16px;font-weight:bold;color:#000;transform:scaleX(1.018);transform-origin:100% 0;">-4,913.42</div>
<div class="t" style="right:210px;top:1004.46px;font-size:16px;line-height:16px;font-weight:bold;color:#000;transform:scaleX(1.018);transform-origin:100% 0;">-4,900.00</div>
<div class="t" style="right:93px;top:1004.46px;font-size:16px;line-height:16px;font-weight:bold;color:#000;transform:scaleX(1.018);transform-origin:100% 0;">-4,900.00</div>
<div class="t sc" style="transform:scaleX(1.0456);transform-origin:0 0;left:64.3px;top:1028.46px;font-size:16px;line-height:16px;font-style:italic;color:#000;">Operating profit margin</div>
<div class="t" style="right:1149.5px;top:1028.46px;font-size:16px;line-height:16px;font-style:italic;color:#000;">99.1%</div>
<div style="position:absolute;left:1830px;top:951px;width:63px;height:72px;overflow:hidden"><div class="t" style="left:36px;top:5.46px;font-size:16px;line-height:16px;color:#000">-14,900.00</div><div class="t" style="left:36.40000000000009px;top:53.46px;font-size:16px;line-height:16px;font-weight:bold;color:#000">-14,900.00</div></div>
<div class="r" style="left:1040px;top:1072px;width:190px;height:10px;background:#fff;"></div>
<div class="r" style="left:0px;top:1073px;width:1053px;height:41px;background:#e6e9ed;border-top-right-radius:6px;"></div>
<div class="r" style="left:1219px;top:1073px;width:700px;height:41px;background:#e6e9ed;border-top-left-radius:6px;"></div>
<div class="r" style="left:1053px;top:1080px;width:166px;height:34px;background:#e6e9ed;"></div>
<div class="r" style="left:1894px;top:98px;width:25px;height:975px;background:#e6e9ed;"></div>
<div class="r" style="left:1894px;top:122px;width:1px;height:951px;background:#d9d9d9;"></div>
<div class="r" style="left:1897px;top:99px;width:21px;height:977px;background:#f4f4f4;border-radius:10px;"></div>
<svg style="left:0;top:0" width="1919" height="1136">
<path d="M1907.5 104.3 L1912.6 112.3 H1902.4 Z" fill="#707070" stroke="#707070" stroke-width="1" stroke-linejoin="round"/>
<path d="M1907.5 1069.7 L1912.6 1061.7 H1902.4 Z" fill="#707070" stroke="#707070" stroke-width="1" stroke-linejoin="round"/>
</svg>
<div class="r" style="left:1902px;top:119px;width:11px;height:723px;background:#707070;border-radius:5.5px;"></div>
<div class="r" style="left:0px;top:1072px;width:1040px;height:1px;background:#dadada;"></div>
<div class="r" style="left:1232px;top:1072px;width:662px;height:1px;background:#dadada;"></div>
<div class="r" style="left:0px;top:1113px;width:1919px;height:1px;background:#c9c9c9;"></div>
<svg style="left:0;top:0" width="1919" height="1136"><g stroke="#8a8a8a" stroke-width="1.2" fill="none">
<path d="M39.5 1085.5 L33.5 1092 L39.5 1098.5"/></g>
<g stroke="#333" stroke-width="1.2" fill="none"><path d="M72.5 1085.5 L78.5 1092 L72.5 1098.5"/></g></svg>
<div class="r" style="left:141px;top:1078px;width:81px;height:30px;background:#fff;border-radius:5px;"></div>
<div class="t sc" style="transform:scaleX(0.9957);transform-origin:0 0;left:152.2px;top:1086.19px;font-size:17.5px;line-height:17.5px;color:#1b1b1b;">How To</div>
<div class="r" style="left:233px;top:1078px;width:115px;height:30px;background:#fdfbc9;border-radius:5px;"></div>
<div class="t sc" style="transform:scaleX(0.9992);transform-origin:0 0;left:244.8px;top:1086.19px;font-size:17.5px;line-height:17.5px;color:#1b1b1b;">Main Inputs</div>
<div class="r" style="left:359px;top:1078px;width:135px;height:30px;background:#fdfbc9;border-radius:5px;"></div>
<div class="t sc" style="transform:scaleX(0.9378);transform-origin:0 0;left:370.6px;top:1086.19px;font-size:17.5px;line-height:17.5px;color:#1b1b1b;">Asset Revenue</div>
<div class="t sc" style="transform:scaleX(0.9377);transform-origin:0 0;left:516.5px;top:1086.19px;font-size:17.5px;line-height:17.5px;color:#1b1b1b;">Revenue</div>
<div class="t sc" style="transform:scaleX(0.9218);transform-origin:0 0;left:616.6px;top:1086.19px;font-size:17.5px;line-height:17.5px;color:#1b1b1b;">General Ex</div>
<div class="t sc" style="transform:scaleX(1.0024);transform-origin:0 0;left:731.3px;top:1086.19px;font-size:17.5px;line-height:17.5px;color:#1b1b1b;">Working Capital</div>
<div class="t sc" style="transform:scaleX(0.8909);transform-origin:0 0;left:889.2px;top:1086.19px;font-size:17.5px;line-height:17.5px;color:#1b1b1b;">CapEx</div>
<div class="t sc" style="transform:scaleX(0.9881);transform-origin:0 0;left:968.3px;top:1086.19px;font-size:17.5px;line-height:17.5px;color:#1b1b1b;">Funding</div>
<div class="r" style="left:1053px;top:1072px;width:166px;height:36px;background:#fff;border-radius:0 0 5px 5px;"></div>
<div class="t sc" style="transform:scaleX(1.0244);transform-origin:0 0;left:1063.3px;top:1082.19px;font-size:17.5px;line-height:17.5px;color:#1b1b1b;-webkit-text-stroke:0.5px #1b1b1b;">Income Statement</div>
<div class="r" style="left:1063px;top:1103px;width:146px;height:2px;background:#117a3f;"></div>
<div class="t sc" style="transform:scaleX(0.9495);transform-origin:0 0;left:1240.5px;top:1086.19px;font-size:17.5px;line-height:17.5px;color:#1b1b1b;">Cash Flow</div>
<div class="t sc" style="transform:scaleX(0.9381);transform-origin:0 0;left:1353.6px;top:1086.19px;font-size:17.5px;line-height:17.5px;color:#1b1b1b;">Balance Sheet</div>
<div style="position:absolute;left:1483px;top:1078px;width:96px;height:30px;overflow:hidden;"><div class="r" style="left:0;top:0;width:110px;height:30px;background:#fdfbc9;border-radius:5px;"></div><div class="t sc" style="transform:scaleX(0.9794);transform-origin:0 0;left:12.2px;top:8.19px;font-size:17.5px;line-height:17.5px;color:#1b1b1b;">Salary Assu</div></div>
<div class="r" style="left:227px;top:1081px;width:1px;height:24px;background:#c8c8c8;"></div>
<div class="r" style="left:353px;top:1081px;width:1px;height:24px;background:#c8c8c8;"></div>
<div class="r" style="left:499px;top:1081px;width:1px;height:24px;background:#c8c8c8;"></div>
<div class="r" style="left:598px;top:1081px;width:1px;height:24px;background:#c8c8c8;"></div>
<div class="r" style="left:713px;top:1081px;width:1px;height:24px;background:#c8c8c8;"></div>
<div class="r" style="left:872px;top:1081px;width:1px;height:24px;background:#c8c8c8;"></div>
<div class="r" style="left:951px;top:1081px;width:1px;height:24px;background:#c8c8c8;"></div>
<div class="r" style="left:1047px;top:1081px;width:1px;height:24px;background:#c8c8c8;"></div>
<div class="r" style="left:1224px;top:1081px;width:1px;height:24px;background:#c8c8c8;"></div>
<div class="r" style="left:1335px;top:1081px;width:1px;height:24px;background:#c8c8c8;"></div>
<div class="r" style="left:1477px;top:1081px;width:1px;height:24px;background:#c8c8c8;"></div>
<svg style="left:0;top:0" width="1919" height="1136">
<g fill="#333"><circle cx="1593" cy="1092" r="1.6"/><circle cx="1598.5" cy="1092" r="1.6"/><circle cx="1604" cy="1092" r="1.6"/>
<rect x="1677.6" y="1086.6" width="2.8" height="2.8" rx="0.8"/><rect x="1677.6" y="1091.6" width="2.8" height="2.8" rx="0.8"/><rect x="1677.6" y="1096.6" width="2.8" height="2.8" rx="0.8"/></g>
<path d="M1631 1091.5 H1646 M1638.5 1084 V1099" stroke="#333" stroke-width="1.3"/>
</svg>
<div class="r" style="left:1698px;top:1082px;width:199px;height:20px;background:#f6f6f6;border-radius:10px;"></div>
<div class="r" style="left:1720px;top:1087px;width:80px;height:11px;background:#707070;border-radius:5.5px;"></div>
<svg style="left:0;top:0" width="1919" height="1136">
<path d="M1704.5 1092.5 L1713.5 1087.5 V1097.5 Z" fill="#707070" stroke="#707070" stroke-linejoin="round"/>
<path d="M1890.5 1092.5 L1881.5 1087.5 V1097.5 Z" fill="#707070" stroke="#707070" stroke-linejoin="round"/>
</svg>
<div class="r" style="left:0px;top:1114px;width:1919px;height:22px;background:#f3f3f3;"></div>
<div class="t sc" style="transform:scaleX(0.9514);transform-origin:0 0;left:15.5px;top:1121.66px;font-size:12.8px;line-height:12.8px;color:#3c3c3c;">Ready</div>
<svg style="left:0;top:0" width="1919" height="1136"><g stroke="#444" stroke-width="1.3" fill="none">
<path d="M76 1136 V1120.2 H92.3 V1125"/><path d="M76 1122.6 H92.3"/>
<path d="M78.3 1125.3 H81.3 M78.3 1127.8 H79.8 M78.3 1130.3 H79.8 M76 1134.3 H81"/>
<circle cx="87.2" cy="1130.2" r="5.2"/></g>
<circle cx="87.2" cy="1130.2" r="2.1" fill="#333"/>
<g stroke="#333" stroke-width="1.2" fill="none" stroke-linejoin="round" stroke-linecap="round">
<circle cx="122.6" cy="1121.2" r="2.1"/>
<path d="M115.3 1122.4 Q116.5 1120.6 118 1121.4 L120.6 1123 Q122.6 1124 124.6 1123 L127.2 1121.4 Q128.8 1120.6 130 1122.6 Q129.8 1123.8 128.3 1124.6 L125.9 1125.7 L124.9 1127.3 M122.6 1129.7 L123.8 1132 M122.6 1129.7 L120.7 1132.4 L119.2 1135 Q118.1 1135 118.2 1133.8 L119.6 1125.3 L117 1124.1 Q115.2 1123.4 115.3 1122.4"/>
</g>
<path d="M124.8 1127.3 L132.6 1136 M132.6 1127.3 L124.8 1136" stroke="#333" stroke-width="1"/>
</svg>
<div class="t sc" style="transform:scaleX(0.9601);transform-origin:0 0;left:137.6px;top:1121.13px;font-size:13.2px;line-height:13.2px;font-weight:bold;color:#262626;">Accessibility: Investigate</div>
<div class="r" style="left:1548px;top:1114px;width:49px;height:22px;background:#dcdcdc;"></div>
<svg style="left:0;top:0" width="1919" height="1136"><g stroke="#444" stroke-width="1.1" fill="none">
<rect x="1563.8" y="1118.5" width="17" height="15.5"/>
<path d="M1563.8 1123.7 H1580.8 M1563.8 1128.9 H1580.8 M1569.5 1118.5 V1134 M1575.1 1118.5 V1134"/>
<rect x="1614.5" y="1118.5" width="17" height="15.5"/>
<rect x="1618" y="1121.5" width="10" height="9.5"/>
<path d="M1620 1124 H1626 M1620 1126.3 H1626 M1620 1128.6 H1626"/>
<rect x="1664.5" y="1118.5" width="16.5" height="15.5"/><path d="M1668.5 1118.5 V1126.5 H1676 V1118.5 M1672.2 1118.5 V1126.5"/>
<path d="M1705 1127 H1714 M1851 1127 H1861.5 M1856.2 1122 V1132"/>
</g>
<path d="M1721 1127.5 H1846" stroke="#6a6a6a" stroke-width="1"/>
<rect x="1781" y="1120" width="5.5" height="13.5" fill="#555"/>
</svg>
<div class="t sc" style="transform:scaleX(0.9233);transform-origin:0 0;left:1878.2px;top:1121.00px;font-size:13px;line-height:13px;color:#333;">100%</div>
</body></html>
